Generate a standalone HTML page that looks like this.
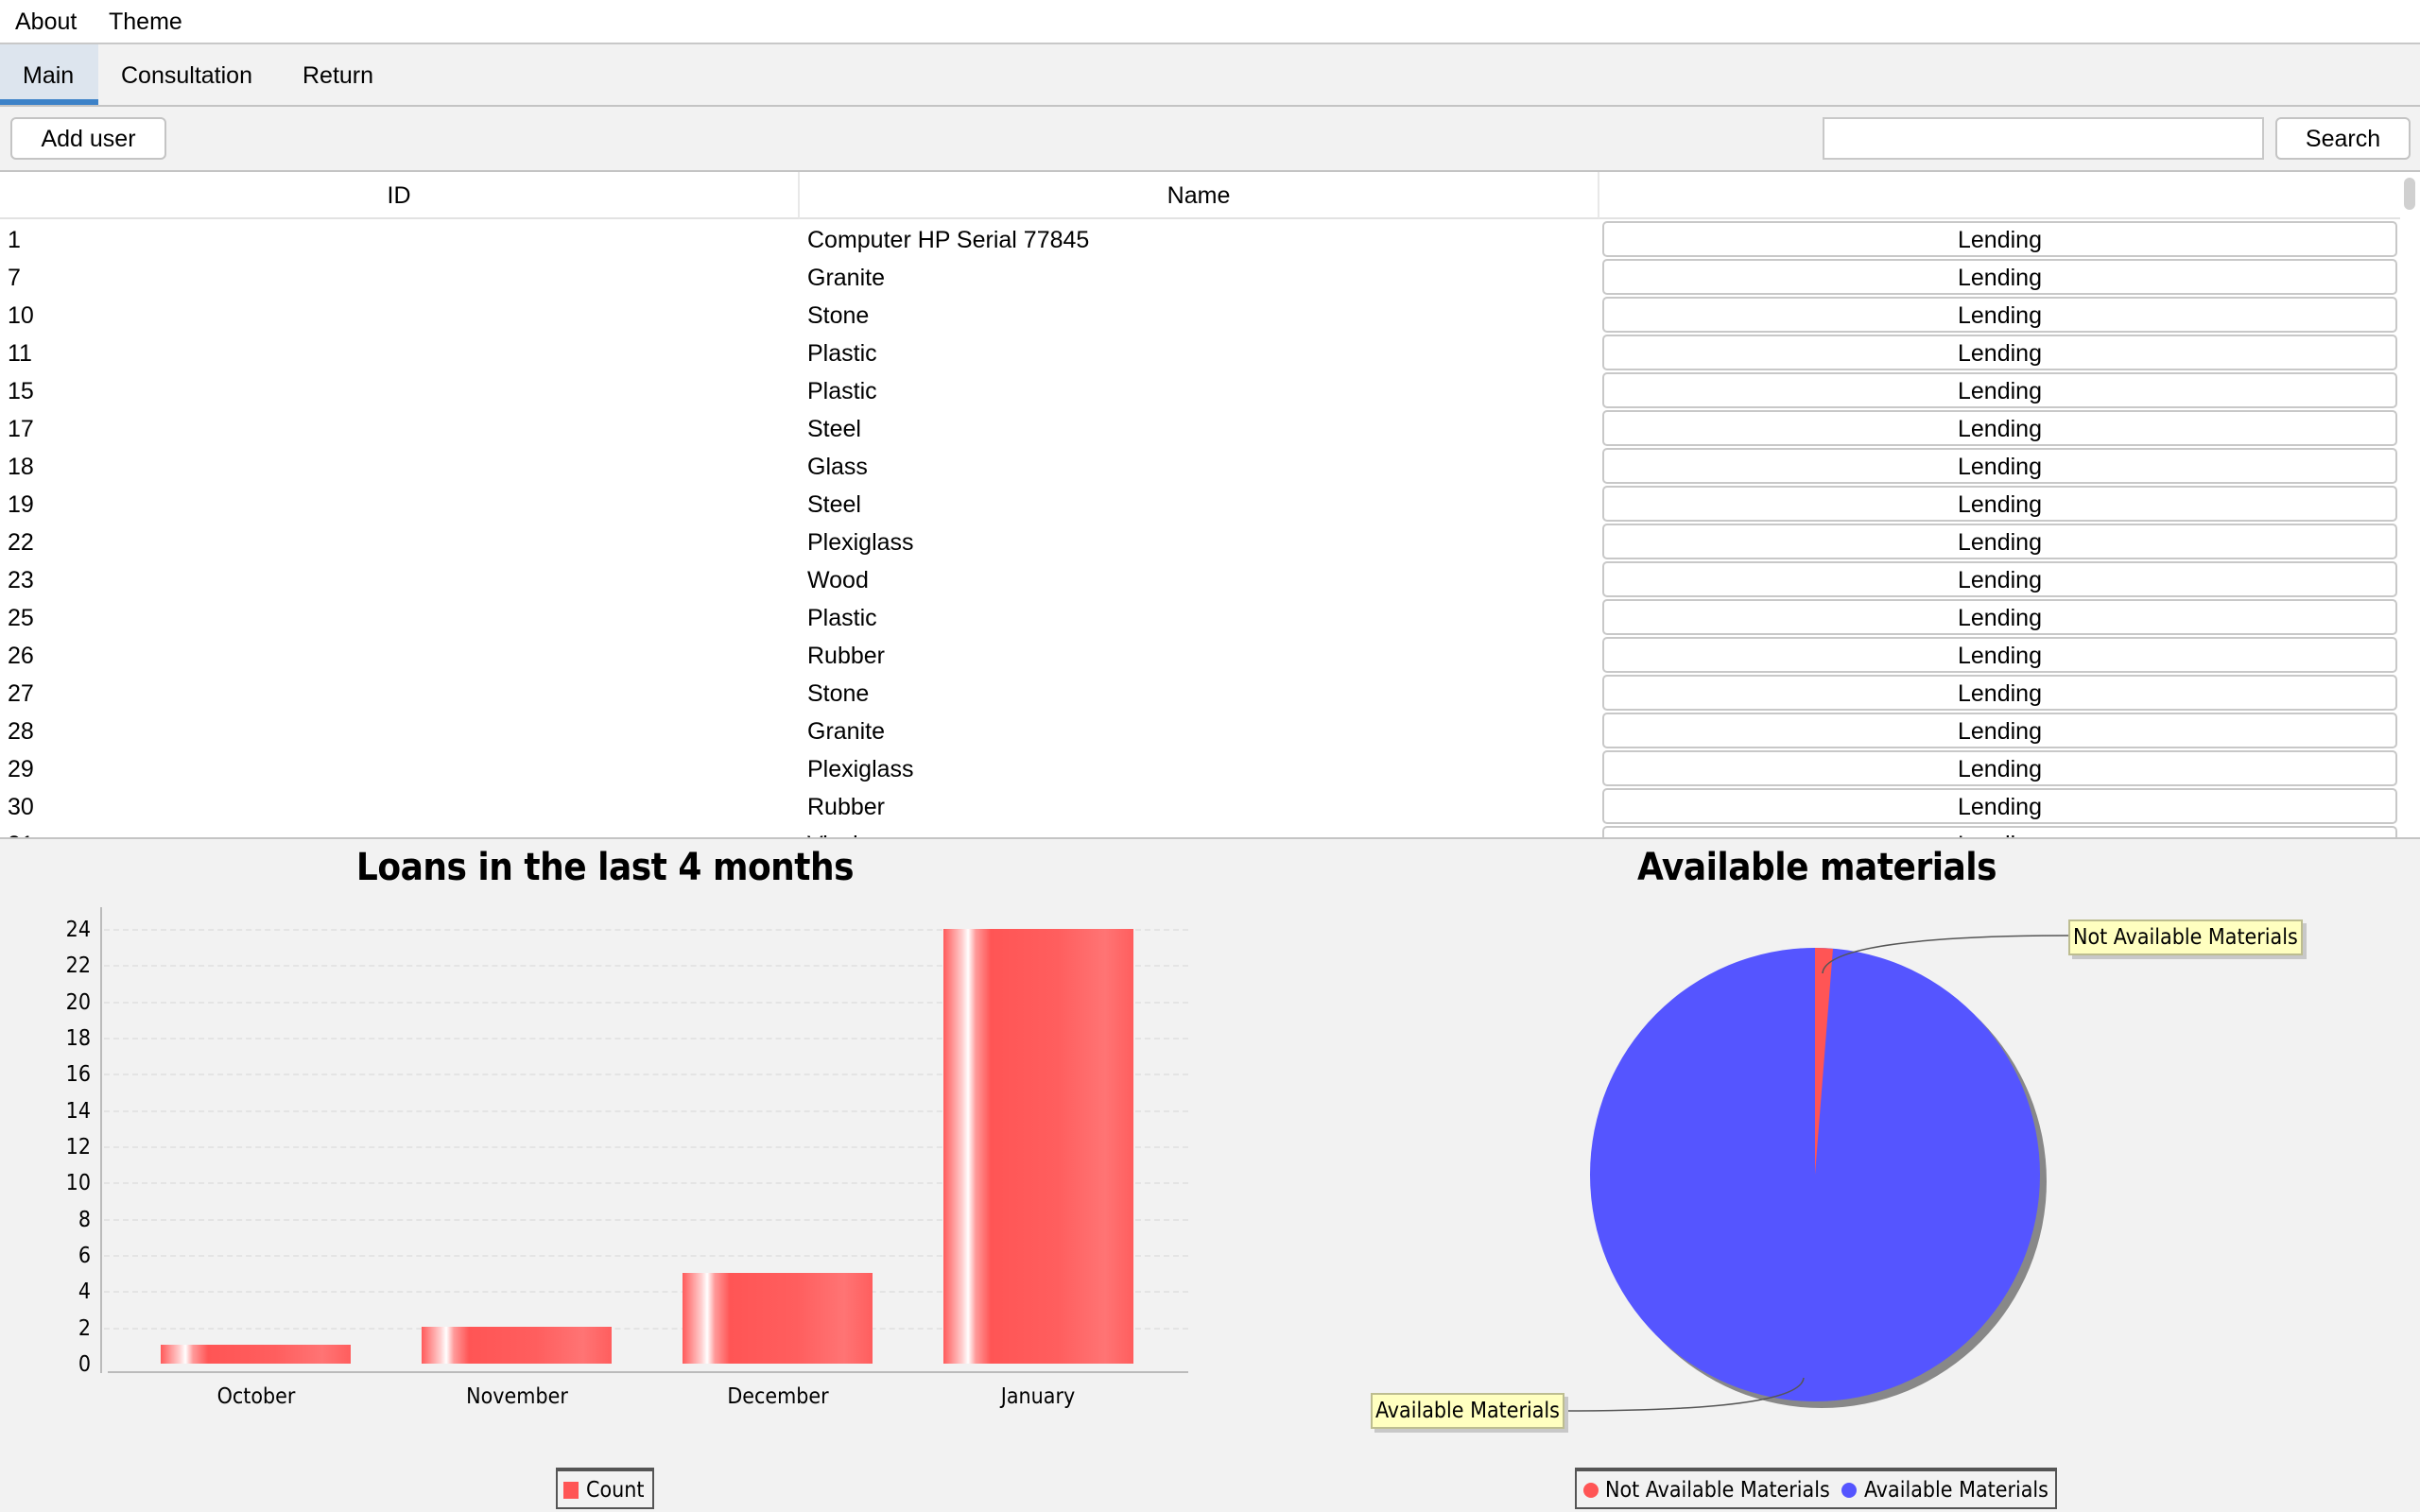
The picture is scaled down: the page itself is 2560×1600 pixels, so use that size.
<!DOCTYPE html>
<html><head><meta charset="utf-8"><style>
*{margin:0;padding:0;box-sizing:border-box}
body{width:2560px;height:1600px;background:#f2f2f2;font-family:"Liberation Sans",sans-serif;position:relative;overflow:hidden;color:#000}
.a{position:absolute}
.menu{left:0;top:0;width:2560px;height:47px;background:#fff;border-bottom:2px solid #c8c8c8;font-size:25px}
.menu span{position:absolute;top:9px}
.tabs{left:0;top:47px;width:2560px;height:66px;background:#f2f2f2;border-bottom:2px solid #c4c4c4;font-size:25px}
.tabs span{position:absolute;top:19px}
.btn{background:#fff;border:2px solid #c4c4c4;border-radius:6px;font-size:25px;text-align:center}
.table{left:0;top:180px;width:2560px;height:708px;background:#fff;border-top:2px solid #c4c4c4;border-bottom:2px solid #c4c4c4;overflow:hidden}
.hd{top:0;height:50px;border-bottom:2px solid #e2e2e2;font-size:25px;text-align:center;line-height:50px}
.row{position:absolute;left:0;width:2539px;height:40px;font-size:25px}
.row .i{position:absolute;left:8px;top:7px}
.row .n{position:absolute;left:854px;top:7px}
.row .l{position:absolute;left:1695px;top:1px;width:841px;height:38px;background:#fff;border:2px solid #c8c8c8;border-radius:5px;text-align:center;line-height:36px}
.ch{font-family:"DejaVu Sans Condensed","DejaVu Sans",sans-serif}
.title{font-weight:bold;font-size:40px;text-align:center;top:895px;letter-spacing:-0.5px}
.yl{position:absolute;left:40px;width:56px;text-align:right;font-size:23px}
.grid{position:absolute;left:110px;width:1147px;border-top:2px dashed #e4e4e4}
.bar{position:absolute;width:201px;bottom:157px;background:linear-gradient(90deg,#ff5a5a 0%,#ffd0d0 10%,#ffffff 13%,#ff9a9a 17%,#ff5555 25%,#ff5e5e 60%,#ff7474 85%,#ff5e5e 100%)}
.xl{position:absolute;top:1465px;font-size:23px;width:200px;text-align:center}
.lbl{background:#ffffc0;border:2px solid #bdbd90;box-shadow:4px 4px 0 #c8c8c8;font-size:23px;line-height:34px;padding:0 3px}
</style></head><body>
<div class="a menu"><span style="left:16px">About</span><span style="left:115px">Theme</span></div>
<div class="a tabs">
<div class="a" style="left:0;top:0;width:104px;height:64px;background:#dde5ee;border-bottom:6px solid #3d82c8"></div>
<span style="left:24px">Main</span><span style="left:128px">Consultation</span><span style="left:320px">Return</span></div>
<div class="a btn" style="left:11px;top:124px;width:165px;height:45px;line-height:43px">Add user</div>
<div class="a" style="left:1928px;top:124px;width:467px;height:45px;background:#fff;border:2px solid #c8c8c8"></div>
<div class="a btn" style="left:2407px;top:124px;width:143px;height:45px;line-height:43px">Search</div>
<div class="a table">
<div class="a hd" style="left:0;width:846px;border-right:2px solid #e8e8e8">ID</div>
<div class="a hd" style="left:846px;width:846px;border-right:2px solid #e8e8e8">Name</div>
<div class="a hd" style="left:1692px;width:847px"></div>
<div class="a" style="left:2543px;top:6px;width:12px;height:34px;background:#d0d0d0;border-radius:6px"></div>
<div style="position:absolute;left:0;top:51px">
<div class="row" style="top:0"><span class="i">1</span><span class="n">Computer HP Serial 77845</span><span class="l">Lending</span></div>
<div class="row" style="top:40px"><span class="i">7</span><span class="n">Granite</span><span class="l">Lending</span></div>
<div class="row" style="top:80px"><span class="i">10</span><span class="n">Stone</span><span class="l">Lending</span></div>
<div class="row" style="top:120px"><span class="i">11</span><span class="n">Plastic</span><span class="l">Lending</span></div>
<div class="row" style="top:160px"><span class="i">15</span><span class="n">Plastic</span><span class="l">Lending</span></div>
<div class="row" style="top:200px"><span class="i">17</span><span class="n">Steel</span><span class="l">Lending</span></div>
<div class="row" style="top:240px"><span class="i">18</span><span class="n">Glass</span><span class="l">Lending</span></div>
<div class="row" style="top:280px"><span class="i">19</span><span class="n">Steel</span><span class="l">Lending</span></div>
<div class="row" style="top:320px"><span class="i">22</span><span class="n">Plexiglass</span><span class="l">Lending</span></div>
<div class="row" style="top:360px"><span class="i">23</span><span class="n">Wood</span><span class="l">Lending</span></div>
<div class="row" style="top:400px"><span class="i">25</span><span class="n">Plastic</span><span class="l">Lending</span></div>
<div class="row" style="top:440px"><span class="i">26</span><span class="n">Rubber</span><span class="l">Lending</span></div>
<div class="row" style="top:480px"><span class="i">27</span><span class="n">Stone</span><span class="l">Lending</span></div>
<div class="row" style="top:520px"><span class="i">28</span><span class="n">Granite</span><span class="l">Lending</span></div>
<div class="row" style="top:560px"><span class="i">29</span><span class="n">Plexiglass</span><span class="l">Lending</span></div>
<div class="row" style="top:600px"><span class="i">30</span><span class="n">Rubber</span><span class="l">Lending</span></div>
<div class="row" style="top:640px"><span class="i">31</span><span class="n">Vinyl</span><span class="l">Lending</span></div>
</div></div>

<div class="ch">
<div class="a title" style="left:240px;width:800px">Loans in the last 4 months</div>
<div class="a" style="left:106px;top:960px;width:2px;height:493px;background:#bbb"></div>
<div class="a" style="left:114px;top:1451px;width:1143px;height:2px;background:#bbb"></div>
<div class="grid" style="top:983px"></div><div class="grid" style="top:1021px"></div><div class="grid" style="top:1060px"></div><div class="grid" style="top:1098px"></div><div class="grid" style="top:1136px"></div><div class="grid" style="top:1175px"></div><div class="grid" style="top:1213px"></div><div class="grid" style="top:1251px"></div><div class="grid" style="top:1290px"></div><div class="grid" style="top:1328px"></div><div class="grid" style="top:1366px"></div><div class="grid" style="top:1405px"></div>
<div class="yl" style="top:971px">24</div><div class="yl" style="top:1009px">22</div><div class="yl" style="top:1048px">20</div><div class="yl" style="top:1086px">18</div><div class="yl" style="top:1124px">16</div><div class="yl" style="top:1163px">14</div><div class="yl" style="top:1201px">12</div><div class="yl" style="top:1239px">10</div><div class="yl" style="top:1278px">8</div><div class="yl" style="top:1316px">6</div><div class="yl" style="top:1354px">4</div><div class="yl" style="top:1393px">2</div><div class="yl" style="top:1431px">0</div>
<div class="bar" style="left:170px;height:20px"></div>
<div class="bar" style="left:446px;height:39px"></div>
<div class="bar" style="left:722px;height:96px"></div>
<div class="bar" style="left:998px;height:460px"></div>
<div class="xl" style="left:171px">October</div><div class="xl" style="left:447px">November</div><div class="xl" style="left:723px">December</div><div class="xl" style="left:998px">January</div>
<div class="a" style="left:588px;top:1553px;width:104px;height:44px;border:2px solid #555;border-top-width:4px;font-size:23px;line-height:40px;padding-left:30px;background:#f2f2f2"><span class="a" style="left:6px;top:11px;width:16px;height:18px;background:#ff5555"></span>Count</div>

<div class="a title" style="left:1522px;width:800px">Available materials</div>
<svg class="a" style="left:0;top:0" width="2560" height="1600">
<ellipse cx="1927" cy="1250" rx="238" ry="240" fill="#888"/>
<ellipse cx="1920" cy="1243" rx="238" ry="240" fill="#5555ff"/>
<path d="M1920 1243 L1920 1003 A238 240 0 0 1 1939 1004 Z" fill="#ff5555"/>
<path d="M1928 1030 C1930 1000,2050 990,2188 990" stroke="#555" stroke-width="1.5" fill="none"/>
<path d="M1908 1458 C1905 1490,1750 1493,1651 1493" stroke="#555" stroke-width="1.5" fill="none"/>
</svg>
<div class="a lbl" style="left:2188px;top:973px">Not Available Materials</div>
<div class="a lbl" style="left:1450px;top:1474px">Available Materials</div>
<div class="a" style="left:1666px;top:1553px;width:510px;height:44px;border:2px solid #555;border-top-width:4px;font-size:23px;line-height:40px;white-space:nowrap;background:#f2f2f2">
<span class="a" style="left:7px;top:12px;width:16px;height:16px;border-radius:50%;background:#ff5555"></span><span class="a" style="left:30px;top:0">Not Available Materials</span>
<span class="a" style="left:280px;top:12px;width:16px;height:16px;border-radius:50%;background:#5555ff"></span><span class="a" style="left:304px;top:0">Available Materials</span></div>
</div>
</body></html>
